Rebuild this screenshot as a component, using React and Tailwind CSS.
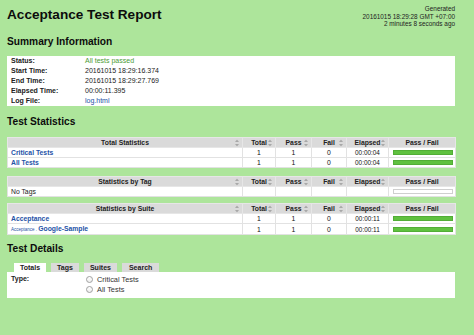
import React from 'react'

const SortArrow = () => (
    <svg className="absolute right-[3px] top-1/2 -translate-y-1/2" width="4" height="7" viewBox="0 0 4 7" aria-hidden="true">
        <path d="M2 0 L4 2.6 L0 2.6 Z" fill="#a8a8a8" />
        <path d="M2 7 L4 4.4 L0 4.4 Z" fill="#a8a8a8" />
    </svg>
)

const Bar = ({ empty }) => (
    <div className={empty
        ? 'ml-[4px] mr-[2px] h-[5px] bg-white border border-[#cfcfcf]'
        : 'ml-[4px] mr-[2px] h-[5px] bg-[#5fc13f] border border-[#52ad36]'} />
)

const StatTable = ({ title, rows, className }) => {
    const th = 'relative h-[10px] p-0 font-bold text-[#222] border border-[#e6e6e6]'
    const td = 'h-[10px] p-0 text-center border border-[#e2e2e2]'
    return (
        <table className={'w-[448px] table-fixed border-collapse bg-white text-[6.8px] leading-[9px] ' + className}>
            <colgroup>
                <col className="w-[235px]" />
                <col className="w-[33px]" />
                <col className="w-[36px]" />
                <col className="w-[35px]" />
                <col className="w-[42px]" />
                <col className="w-[67px]" />
            </colgroup>
            <thead>
                <tr className="bg-[#dadada]">
                    <th className={th}>{title}<SortArrow /></th>
                    <th className={th}>Total<SortArrow /></th>
                    <th className={th}>Pass<SortArrow /></th>
                    <th className={th}>Fail<SortArrow /></th>
                    <th className={th}>Elapsed<SortArrow /></th>
                    <th className={th}>Pass / Fail</th>
                </tr>
            </thead>
            <tbody>
                {rows.map((r, i) => (
                    <tr key={i}>
                        <td className={td + ' text-left pl-[3px]'}>{r.name}</td>
                        <td className={td}>{r.total}</td>
                        <td className={td}>{r.pass}</td>
                        <td className={td}>{r.fail}</td>
                        <td className={td + ' text-[6.4px]'}>{r.elapsed}</td>
                        <td className={td}><Bar empty={r.empty} /></td>
                    </tr>
                ))}
            </tbody>
        </table>
    )
}

const Link = ({ children }) => (
    <span className="font-bold text-[#2452a6]">{children}</span>
)

export default function App() {
    const summary = [
        ['Status:', <span className="text-[#4b9b36]">All tests passed</span>],
        ['Start Time:', '20161015 18:29:16.374'],
        ['End Time:', '20161015 18:29:27.769'],
        ['Elapsed Time:', '00:00:11.395'],
        ['Log File:', <span className="text-[#2452a6]">log.html</span>],
    ]

    return (
        <div className="w-[474px] h-[335px] overflow-hidden bg-[#ade59b] pl-[7px] font-['Liberation_Sans',Arial,sans-serif] text-[#111]">
            {/* Header */}
            <div className="w-[448px] flex justify-between items-start">
                <h1 className="mt-[7px] text-[13.6px] leading-[16px] font-bold text-[#0c0c0c]">Acceptance Test Report</h1>
                <div className="mt-[5px] text-right text-[6.4px] leading-[7.5px] text-[#222]">
                    <div>Generated</div>
                    <div>20161015 18:29:28 GMT +07:00</div>
                    <div>2 minutes 8 seconds ago</div>
                </div>
            </div>

            {/* Summary */}
            <h2 className="mt-[8px] text-[10.2px] leading-[12px] font-bold text-[#0c0c0c]">Summary Information</h2>
            <div className="mt-[8px] w-[448px] bg-white text-[7px]">
                {summary.map(([k, v], i) => (
                    <div key={i} className="flex h-[10.2px] leading-[10.2px]">
                        <div className="w-[78px] pl-[4px] font-bold text-[#222]">{k}</div>
                        <div className="text-[#222]">{v}</div>
                    </div>
                ))}
            </div>

            {/* Statistics */}
            <h2 className="mt-[10px] text-[10.2px] leading-[12px] font-bold text-[#0c0c0c]">Test Statistics</h2>
            <StatTable
                className="mt-[9px]"
                title="Total Statistics"
                rows={[
                    { name: <Link>Critical Tests</Link>, total: 1, pass: 1, fail: 0, elapsed: '00:00:04' },
                    { name: <Link>All Tests</Link>, total: 1, pass: 1, fail: 0, elapsed: '00:00:04' },
                ]}
            />
            <StatTable
                className="mt-[8px]"
                title="Statistics by Tag"
                rows={[
                    { name: <span className="text-[#222]">No Tags</span>, total: '', pass: '', fail: '', elapsed: '', empty: true },
                ]}
            />
            <StatTable
                className="mt-[6px]"
                title="Statistics by Suite"
                rows={[
                    { name: <Link>Acceptance</Link>, total: 1, pass: 1, fail: 0, elapsed: '00:00:11' },
                    {
                        name: (
                            <span>
                                <span className="text-[4.5px] text-[#2452a6]">Acceptance . </span>
                                <Link>Google-Sample</Link>
                            </span>
                        ),
                        total: 1, pass: 1, fail: 0, elapsed: '00:00:11',
                    },
                ]}
            />

            {/* Details */}
            <h2 className="mt-[8px] text-[10.2px] leading-[12px] font-bold text-[#0c0c0c]">Test Details</h2>
            <div className="mt-[8px] ml-[7px] flex gap-[5px] text-[7px] font-bold text-[#222]">
                <div className="h-[9px] leading-[10px] px-[6px] bg-white">Totals</div>
                <div className="h-[9px] leading-[10px] px-[6px] bg-[#dadada]">Tags</div>
                <div className="h-[9px] leading-[10px] px-[6px] bg-[#dadada]">Suites</div>
                <div className="h-[9px] leading-[10px] px-[7px] bg-[#dadada]">Search</div>
            </div>
            <div className="w-[448px] h-[26px] bg-white pt-[2px] flex text-[7px]">
                <div className="w-[79px] pl-[4px] font-bold text-[#222] leading-[10px]">Type:</div>
                <div className="flex flex-col">
                    {['Critical Tests', 'All Tests'].map((t) => (
                        <label key={t} className="flex items-center gap-[4px] h-[10px] text-[7.4px] text-[#333]">
                            <span className="mt-[1px] w-[7px] h-[7px] rounded-full border border-[#a0a0a0] bg-gradient-to-b from-white to-[#eeeeee]" />
                            {t}
                        </label>
                    ))}
                </div>
            </div>
        </div>
    )
}
